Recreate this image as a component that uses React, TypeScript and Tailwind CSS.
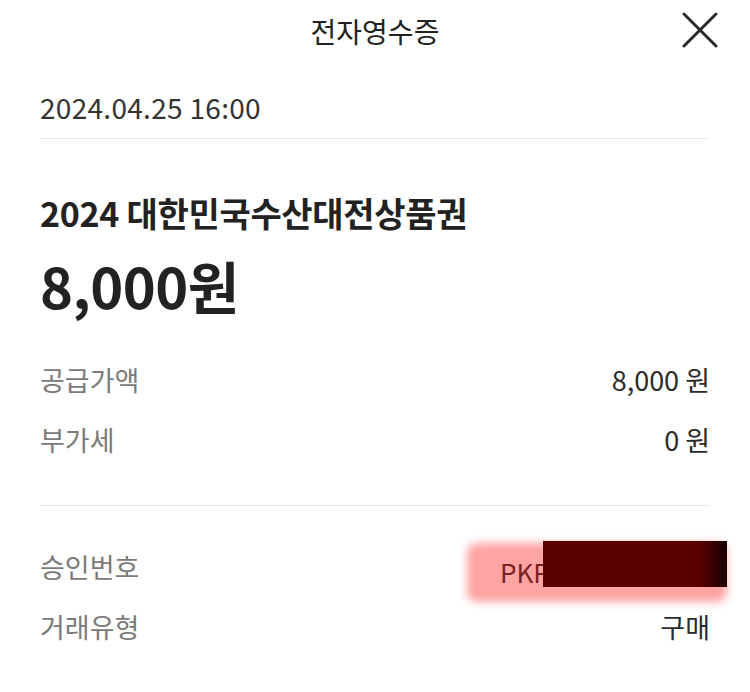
import React from "react";

const font = { fontFamily: '"Noto Sans CJK KR", "Noto Sans", sans-serif' };

function Row({ label, value }: { label: string; value: React.ReactNode }) {
  return (
    <div className="flex h-[40px] items-center justify-between">
      <span className="text-[27px] text-[#7a7a7a] leading-[40px]">{label}</span>
      <span className="text-[27px] text-[#2b2b2b] leading-[40px]">{value}</span>
    </div>
  );
}

export default function App() {
  return (
    <div className="w-[750px] h-[692px] bg-white overflow-hidden" style={font}>
      <div className="relative h-[62px] flex items-center justify-center">
        <span className="text-[28px] text-[#222] leading-[40px]">전자영수증</span>
        <svg className="absolute left-[682px] top-[12px]" width="36" height="36" viewBox="0 0 36 36">
          <path d="M2 2 L34 34 M34 2 L2 34" stroke="#2a2a2a" strokeWidth="3" strokeLinecap="round" />
        </svg>
      </div>
      <div className="px-[40px]">
        <div className="mt-[25px] pb-[11px] border-b border-[#e8e8e8]">
          <div className="text-[28px] leading-[40px] text-[#333] tracking-[0.3px]">2024.04.25 16:00</div>
        </div>
        <div className="mt-[52px] text-[34px] font-bold leading-[44px] text-[#222] tracking-[-0.3px]">
          2024 대한민국수산대전상품권
        </div>
        <div className="mt-[18px] text-[56px] font-bold leading-[64px] text-[#222] tracking-[-0.5px]">
          8,000원
        </div>
        <div className="mt-[43px] flex flex-col gap-[20px] pb-[45px] border-b border-[#e8e8e8]">
          <Row label="공급가액" value="8,000 원" />
          <Row label="부가세" value="0 원" />
        </div>
        <div className="mt-[41px] flex flex-col gap-[20px]">
          <div className="relative">
            <Row label="승인번호" value="" />
            <div className="absolute left-[427px] top-[-4px] w-[260px] h-[59px]">
              <div className="absolute inset-0 rounded-[10px] bg-[#ffa3a3] blur-[4px]" />
              <span className="absolute left-[33px] top-[9px] text-[26px] leading-[40px] text-[#7a2020]">PKP</span>
              <div className="absolute left-[76px] top-[-2px] w-[184px] h-[46px] bg-gradient-to-r from-[#5a0000] from-85% to-[#1a0000]" />
            </div>
          </div>
          <Row label="거래유형" value="구매" />
        </div>
      </div>
    </div>
  );
}
